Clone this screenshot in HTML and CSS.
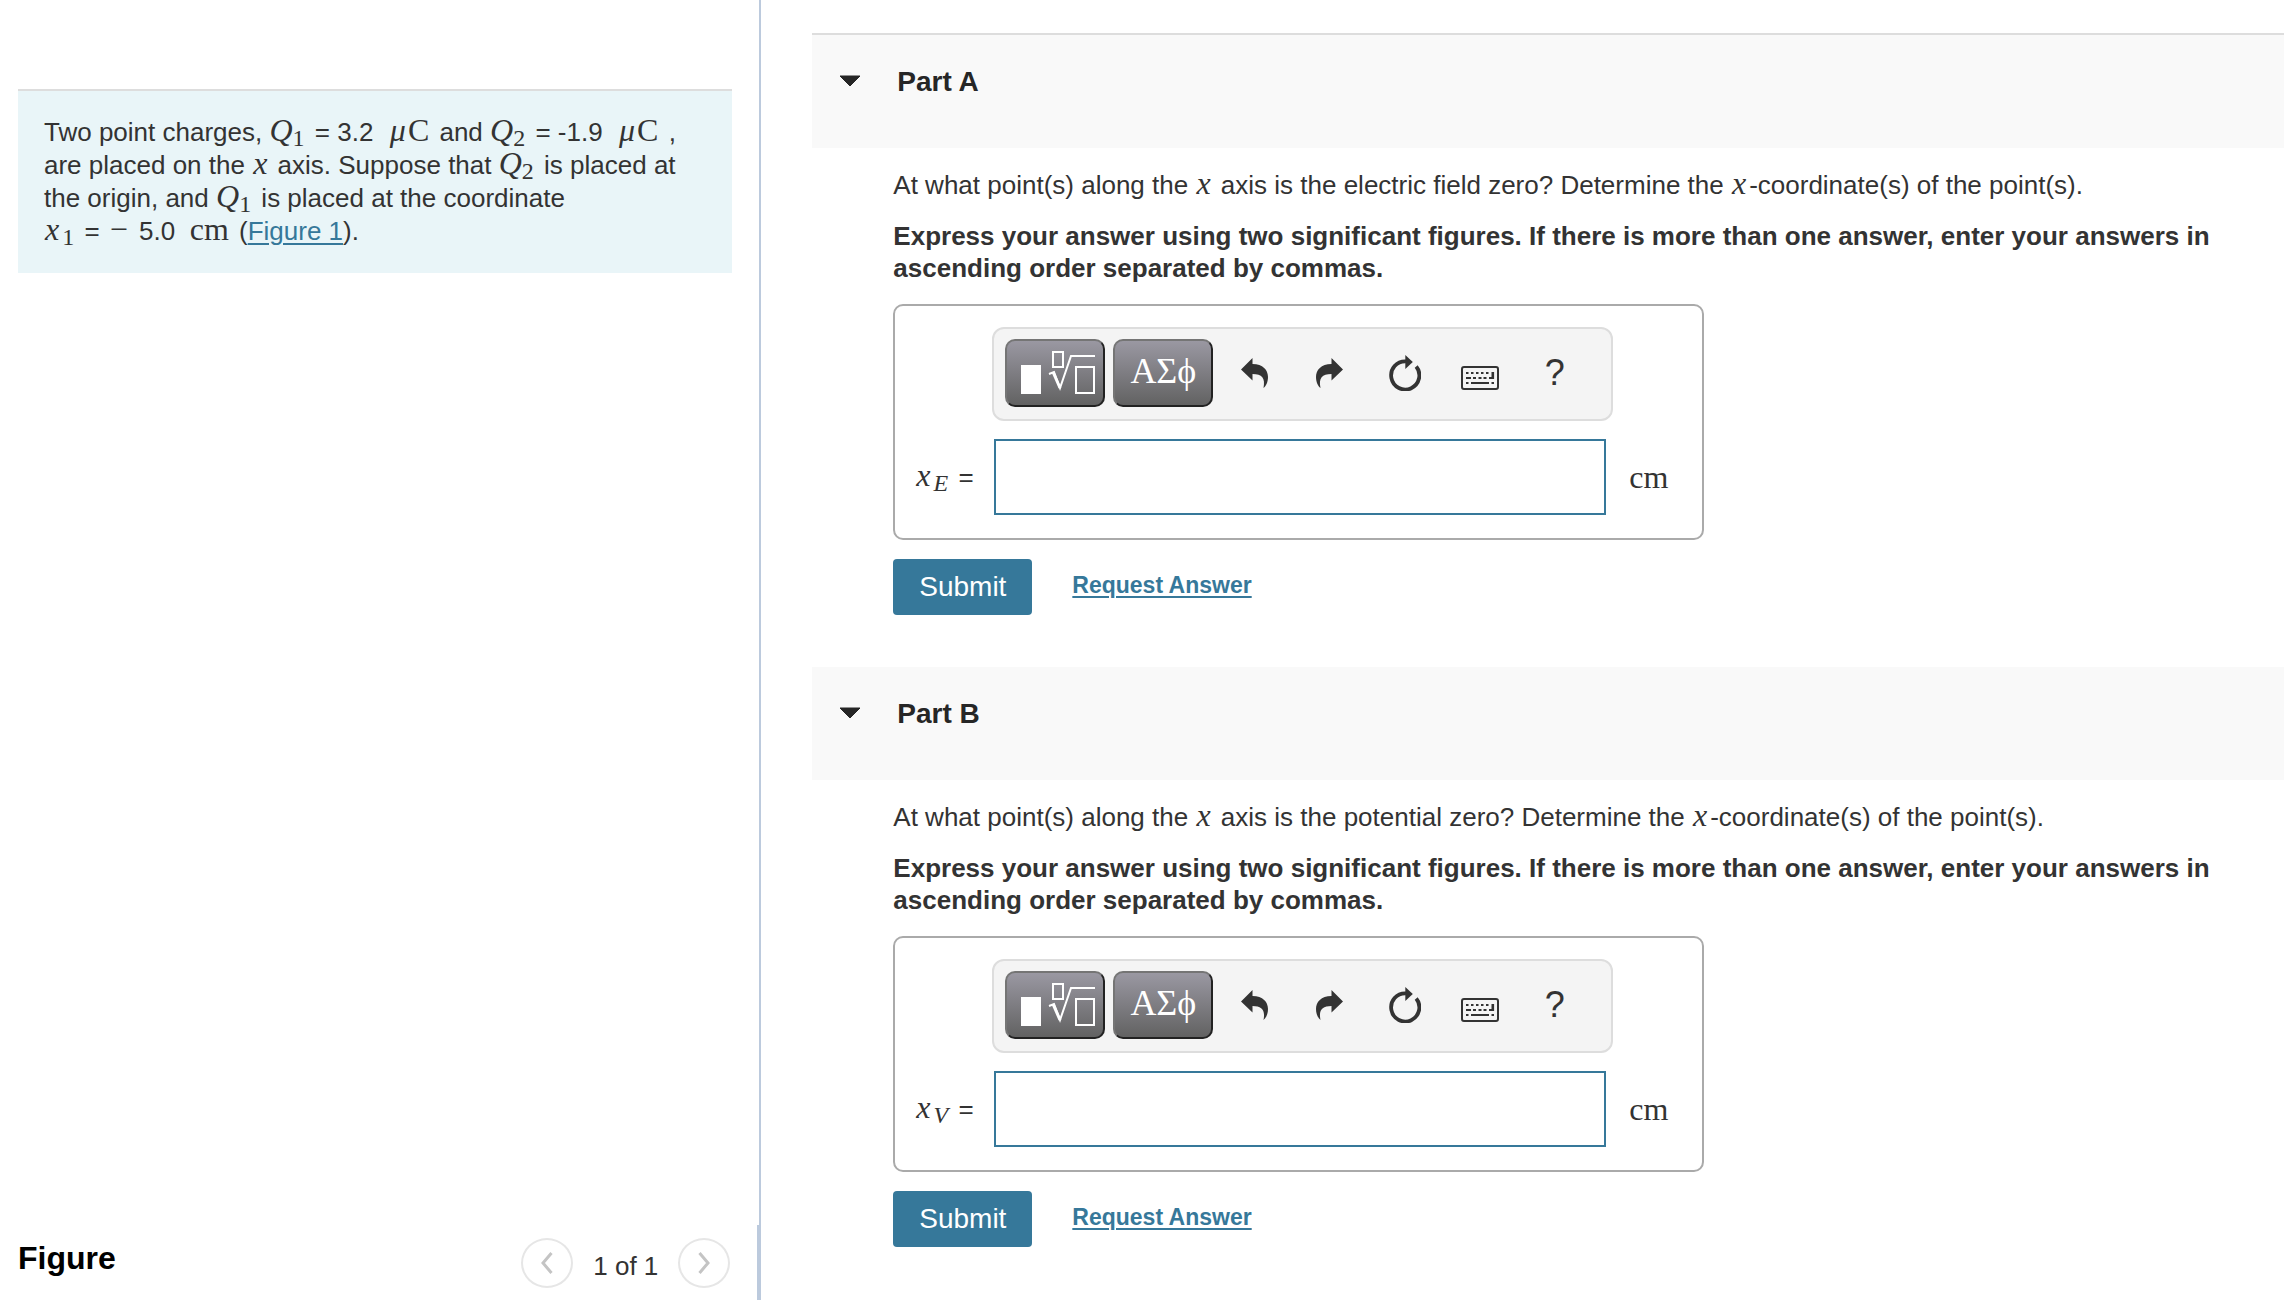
FILE: index.html
```
<!DOCTYPE html>
<html lang="en">
<head>
    <meta charset="UTF-8">
    <meta name="viewport" content="width=device-width, initial-scale=1.0">
    <title>Point Charges</title>
    <link rel="stylesheet" href="styles.css">
</head>
<body>
    <!-- shared toolbar icons -->
    <svg class="icon-defs" aria-hidden="true">
        <symbol id="icon-template" viewBox="0 0 96 64">
            <rect x="14" y="24" width="20" height="29" fill="#fff"/>
            <rect x="46" y="11" width="10" height="15" fill="none" stroke="#fff" stroke-width="2"/>
            <path d="M42 33l5-2 6 16 11-32h24" fill="none" stroke="#fff" stroke-width="2"/>
            <path d="M46 31l7 16" fill="none" stroke="#fff" stroke-width="3"/>
            <rect x="69" y="26" width="18" height="26" fill="none" stroke="#fff" stroke-width="2"/>
        </symbol>
        <symbol id="icon-undo" viewBox="0 0 27 30">
            <path d="M0 11.5L11.5 0v6C22 6 27 12 27 19c0 5-2 9-4.500 11C24.500 20 21 16 11.500 16v6.500z"/>
        </symbol>
        <symbol id="icon-redo" viewBox="0 0 27 30">
            <path d="M27 11.500L15.500 0v6C5 6 0 12 0 19c0 5 2 9 4.500 11C2.500 20 6 16 15.500 16v6.500z"/>
        </symbol>
        <symbol id="icon-reset" viewBox="0 0 32 36">
            <path d="M27.200 11.500A14.100 14.100 0 1 1 17 6.300" fill="none" stroke="#333" stroke-width="3.800"/>
            <path d="M16.300 0l7.500 7-7.500 7z"/>
        </symbol>
        <symbol id="icon-keyboard" viewBox="0 0 38 24">
            <rect x="1" y="1" width="36" height="22" rx="2" fill="none" stroke="#333" stroke-width="2"/>
            <path d="M5 7h2.500M10 7h2.500M15 7h2.500M20 7h2.500M25 7h2.500M5 12h5M12 12h3M17.500 12h3M22.500 12h3M28 12h4.500M5 17h2.500M10 17h18M30.500 17h2.500" fill="none" stroke="#333" stroke-width="2.200"/>
            <path d="M31.800 6v7" fill="none" stroke="#333" stroke-width="2.600"/>
        </symbol>
    </svg>

    <div class="page">
        <aside class="sidebar">
            <div class="problem">
                Two point charges, <span class="math"><i>Q</i><sub>1</sub></span> = 3.2 &nbsp;<span class="math"><i class="mu">μ</i>C</span> and <span class="math"><i>Q</i><sub>2</sub></span> = -1.9 &nbsp;<span class="math"><i class="mu">μ</i>C</span> , are placed on the <i class="math var">x</i> axis. Suppose that <span class="math"><i>Q</i><sub>2</sub></span> is placed at the origin, and <span class="math"><i>Q</i><sub>1</sub></span> is placed at the coordinate <span class="equation"><span class="math"><i class="var">x</i><sub>1</sub></span> = <span class="math minus">−</span> 5.0 &nbsp;<span class="math">cm</span></span> (<a href="#figure">Figure 1</a>).
            </div>

            <div class="figure-bar" id="figure">
                <h2>Figure</h2>
                <div class="pager">
                    <button type="button" class="page-button" aria-label="Previous figure">
                        <svg width="12" height="22" viewBox="0 0 12 22"><path d="M10.500 1L2 11l8.500 10"/></svg>
                    </button>
                    <span class="page-count">1 of 1</span>
                    <button type="button" class="page-button" aria-label="Next figure">
                        <svg width="12" height="22" viewBox="0 0 12 22"><path d="M1.500 1L10 11 1.500 21"/></svg>
                    </button>
                </div>
            </div>
        </aside>

        <main class="content">
            <section class="part">
                <div class="part-header first">
                    <svg class="arrow" width="22" height="12" viewBox="0 0 22 12"><path d="M1 1h20L11 11z"/></svg>
                    <h3>Part A</h3>
                </div>
                <div class="part-body">
                    <p>At what point(s) along the <i class="math var">x</i> axis is the electric field zero? Determine the <i class="math var">x</i>-coordinate(s) of the point(s).</p>
                    <p class="instructions">Express your answer using two significant figures. If there is more than one answer, enter your answers in ascending order separated by commas.</p>
                    <div class="answer-box">
                        <div class="toolbar">
                            <button type="button" class="dark-button" aria-label="Templates"><svg width="96" height="64"><use href="#icon-template"/></svg></button>
                            <button type="button" class="dark-button greek">ΑΣϕ</button>
                            <div class="tools">
                                <button type="button" class="tool" aria-label="Undo"><svg width="27" height="30"><use href="#icon-undo"/></svg></button>
                                <button type="button" class="tool" aria-label="Redo"><svg width="27" height="30"><use href="#icon-redo"/></svg></button>
                                <button type="button" class="tool" aria-label="Reset"><svg width="32" height="36"><use href="#icon-reset"/></svg></button>
                                <button type="button" class="tool keyboard" aria-label="Keyboard shortcuts"><svg width="38" height="24"><use href="#icon-keyboard"/></svg></button>
                                <button type="button" class="tool">?</button>
                            </div>
                        </div>
                        <div class="answer-row">
                            <label for="answer-a"><span class="math"><i class="var">x</i><sub><i>E</i></sub></span> =</label>
                            <input type="text" id="answer-a">
                            <span class="math">cm</span>
                        </div>
                    </div>
                    <div class="actions">
                        <button type="button" class="submit">Submit</button>
                        <a href="#" class="request">Request Answer</a>
                    </div>
                </div>
            </section>

            <section class="part">
                <div class="part-header">
                    <svg class="arrow" width="22" height="12" viewBox="0 0 22 12"><path d="M1 1h20L11 11z"/></svg>
                    <h3>Part B</h3>
                </div>
                <div class="part-body">
                    <p>At what point(s) along the <i class="math var">x</i> axis is the potential zero? Determine the <i class="math var">x</i>-coordinate(s) of the point(s).</p>
                    <p class="instructions">Express your answer using two significant figures. If there is more than one answer, enter your answers in ascending order separated by commas.</p>
                    <div class="answer-box">
                        <div class="toolbar">
                            <button type="button" class="dark-button" aria-label="Templates"><svg width="96" height="64"><use href="#icon-template"/></svg></button>
                            <button type="button" class="dark-button greek">ΑΣϕ</button>
                            <div class="tools">
                                <button type="button" class="tool" aria-label="Undo"><svg width="27" height="30"><use href="#icon-undo"/></svg></button>
                                <button type="button" class="tool" aria-label="Redo"><svg width="27" height="30"><use href="#icon-redo"/></svg></button>
                                <button type="button" class="tool" aria-label="Reset"><svg width="32" height="36"><use href="#icon-reset"/></svg></button>
                                <button type="button" class="tool keyboard" aria-label="Keyboard shortcuts"><svg width="38" height="24"><use href="#icon-keyboard"/></svg></button>
                                <button type="button" class="tool">?</button>
                            </div>
                        </div>
                        <div class="answer-row">
                            <label for="answer-b"><span class="math"><i class="var">x</i><sub><i>V</i></sub></span> =</label>
                            <input type="text" id="answer-b">
                            <span class="math">cm</span>
                        </div>
                    </div>
                    <div class="actions">
                        <button type="button" class="submit">Submit</button>
                        <a href="#" class="request">Request Answer</a>
                    </div>
                </div>
            </section>
        </main>
    </div>
</body>
</html>
```
FILE: styles.css
```
* {
    box-sizing: border-box;
}
body {
    margin: 0;
    font-family: "Liberation Sans", Arial, sans-serif;
    font-size: 26px;
    line-height: 32px;
    color: #333;
    background: #fff;
}
h2, h3, p {
    margin: 0;
}
a {
    color: #36789a;
    text-decoration-thickness: 2px;
    text-underline-offset: 3px;
}
button {
    font-family: inherit;
    cursor: pointer;
}
.icon-defs {
    display: none;
}
.page {
    display: grid;
    grid-template-columns: 1fr 2fr;
    min-height: 100vh;
}

/* Math text */
.math {
    margin-right: 3px;
    font-family: "Liberation Serif", "Times New Roman", serif;
    font-size: 32px;
    line-height: 1px;
    white-space: nowrap;
}
.math sub {
    font-size: 24px;
    line-height: 1px;
    vertical-align: -5px;
}
.var {
    margin: 0 3px 0 1px;
}
.mu {
    margin: 0 2px;
}
.minus {
    margin: 0 4px 0 3px;
}
.equation {
    white-space: nowrap;
}

/* Left column */
.sidebar {
    display: flex;
    flex-direction: column;
    justify-content: space-between;
    padding-top: 89px;
    border-right: 2px solid #bccadd;
}
.problem {
    margin: 0 27px 0 18px;
    padding: 25px 26px;
    line-height: 33px;
    background: #e9f5f8;
    border-top: 2px solid #ddd;
}
.figure-bar {
    display: flex;
    justify-content: space-between;
    align-items: flex-start;
    height: 75px;
    padding: 13px 27px 0 18px;
    border-right: 2px solid #bccadd;
}
.figure-bar h2 {
    font-size: 32px;
    line-height: 40px;
    color: #000;
}
.pager {
    display: flex;
    gap: 20px;
}
.page-count {
    line-height: 56px;
}
.page-button {
    display: flex;
    align-items: center;
    justify-content: center;
    width: 52px;
    height: 50px;
    padding: 0;
    background: #fff;
    border: 2px solid #e6e6e6;
    border-radius: 50%;
}
.page-button path {
    fill: none;
    stroke: #c4c4c4;
    stroke-width: 3px;
}

/* Right column */
.content {
    padding: 33px 0 0 51px;
}
.part + .part {
    margin-top: 52px;
}
.part-header {
    display: flex;
    gap: 36px;
    padding: 31px 27px 50px;
    background: #f9f9f9;
}
.part-header.first {
    border-top: 2px solid #ddd;
}
.part-header h3 {
    font-size: 28px;
    line-height: 32px;
    color: #262626;
}
.arrow {
    margin-top: 9px;
    fill: #262626;
    stroke: #262626;
    stroke-width: 1px;
    stroke-linejoin: round;
}
.part-body {
    padding: 21px 60px 0 81px;
}
.instructions {
    margin: 19px 0 20px;
    font-weight: bold;
}
.answer-box {
    max-width: 811px;
    padding: 21px 0 23px;
    border: 2px solid #aaa;
    border-radius: 10px;
}
.toolbar {
    display: flex;
    gap: 8px;
    width: 621px;
    height: 94px;
    margin-left: 97px;
    padding: 10px 11px;
    background: #f4f4f4;
    border: 2px solid #ddd;
    border-radius: 12px;
}
.dark-button {
    width: 100px;
    height: 68px;
    padding: 0;
    color: #fff;
    background: linear-gradient(#9a98a2, #626262);
    border: 2px solid;
    border-color: #757575 #222 #222 #757575;
    border-radius: 10px;
}
.dark-button svg {
    display: block;
}
.greek {
    padding-bottom: 4px;
    font-family: "Liberation Serif", "Times New Roman", serif;
    font-size: 36px;
}
.tools {
    display: flex;
    margin-left: -4px;
}
.tool {
    display: flex;
    align-items: center;
    justify-content: center;
    width: 75px;
    height: 68px;
    padding: 0;
    font-size: 36px;
    color: #333;
    background: none;
    border: none;
    fill: #333;
}
.tool.keyboard {
    padding-top: 10px;
}
.answer-row {
    display: flex;
    align-items: center;
    margin-top: 18px;
}
.answer-row label {
    width: 99px;
    padding-left: 20px;
}
.answer-row input {
    width: 612px;
    height: 76px;
    margin-right: 23px;
    padding: 0 16px;
    font-size: 26px;
    background: #fff;
    border: 2px solid #36789a;
}
.actions {
    display: flex;
    align-items: center;
    gap: 40px;
    margin-top: 19px;
}
.submit {
    width: 139px;
    height: 56px;
    padding: 0;
    font-size: 28px;
    color: #fff;
    background: #36789a;
    border: none;
    border-radius: 4px;
}
.request {
    padding-bottom: 4px;
    font-size: 23px;
    font-weight: bold;
}
```
